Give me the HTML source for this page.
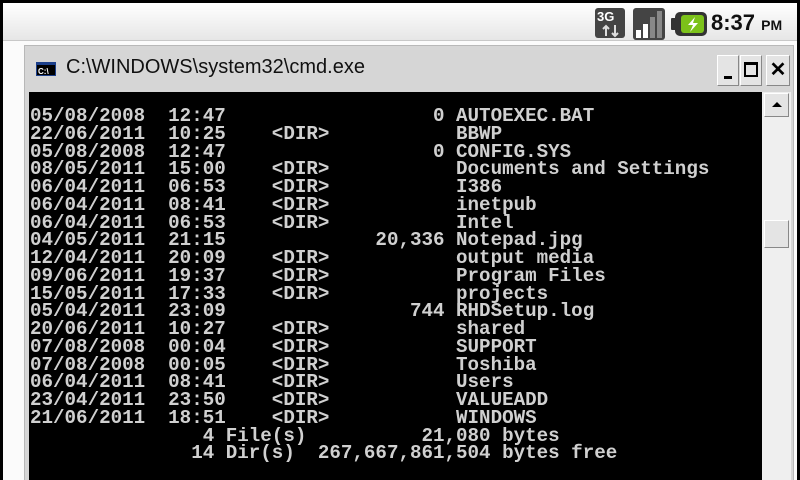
<!DOCTYPE html>
<html><head><meta charset="utf-8"><style>
*{margin:0;padding:0;box-sizing:border-box}
body{width:800px;height:480px;background:#000;position:relative;overflow:hidden;font-family:"Liberation Sans",sans-serif}
#screen{position:absolute;left:3px;top:3px;width:794px;height:477px;background:#fbfbfb;overflow:hidden}
#status{position:absolute;left:0;top:0;width:794px;height:38px;background:linear-gradient(#ffffff,#e6e6e6);border-bottom:1px solid #c8c8c8}
#win{position:absolute;left:21px;top:42px;width:770px;height:440px;background:#d6d6d6;border:1px solid #b8b8b8}
#title{position:absolute;left:0;top:0;width:770px;height:46px}
#console{position:absolute;left:4px;top:46px;width:733px;height:400px;background:#000}
pre{position:absolute;left:1px;top:16px;font-family:"Liberation Mono",monospace;font-weight:bold;font-size:19.2px;line-height:17.75px;color:#d0d0d0}
#sb{position:absolute;left:737px;top:46px;width:29px;height:400px;background:#efefef}
.btn{position:absolute;background:#e4e4e4;border:1px solid #fff;border-right-color:#888;border-bottom-color:#888}
</style></head><body>
<div id="screen">
 <div id="status">
  <svg style="position:absolute;left:592px;top:5px" width="30" height="30" viewBox="0 0 30 30">
   <rect x="0" y="0" width="30" height="30" rx="3" fill="#444"/>
   <text x="2" y="13" font-family="Liberation Sans" font-weight="bold" font-size="13" fill="#fff">3G</text>
   <path d="M11 28V19M8 21l3-3 3 3M20 17v10M17 25l3 3 3-3" stroke="#ddd" stroke-width="2" fill="none"/>
  </svg>
  <svg style="position:absolute;left:630px;top:5px" width="32" height="32" viewBox="0 0 32 32">
   <rect x="0" y="0" width="32" height="32" rx="3" fill="#444"/>
   <rect x="3" y="22" width="5" height="8" fill="#fff"/>
   <rect x="10" y="16" width="5" height="14" fill="#fff"/>
   <rect x="17" y="9" width="5" height="21" fill="#888"/>
   <rect x="24" y="3" width="5" height="27" fill="#888"/>
  </svg>
  <svg style="position:absolute;left:668px;top:9px" width="36" height="24" viewBox="0 0 36 24">
   <rect x="0" y="6" width="5" height="12" rx="1" fill="#333"/>
   <rect x="4" y="0" width="32" height="24" rx="5" fill="#333"/>
   <rect x="10" y="3" width="23" height="18" rx="3" fill="#7cc21a"/>
   <path d="M24 5l-7 8h5l-3 7 8-9h-5z" fill="#fff"/>
  </svg>
  <div style="position:absolute;left:708px;top:7px;font-size:22px;font-weight:bold;color:#111">8:37 <span style="font-size:14px">PM</span></div>
 </div>
 <div id="win">
  <div id="title">
   <svg style="position:absolute;left:11px;top:16px" width="20" height="14" viewBox="0 0 20 14">
    <rect width="20" height="14" fill="#1c3f8a"/><rect x="1" y="3" width="18" height="10" fill="#000"/>
    <text x="2" y="12" font-family="Liberation Sans" font-weight="bold" font-size="8" fill="#fff">C:\</text>
   </svg>
   <div style="position:absolute;left:41px;top:10px;font-size:20px;color:#111">C:\WINDOWS\system32\cmd.exe</div>
   <div class="btn" style="left:692px;top:9px;width:22px;height:31px"><div style="position:absolute;left:6px;top:20px;width:8px;height:3px;background:#000"></div></div>
   <div class="btn" style="left:715px;top:9px;width:22px;height:31px"><div style="position:absolute;left:3px;top:6px;width:14px;height:15px;border:2px solid #000;border-top-width:3px"></div></div>
   <div class="btn" style="left:741px;top:9px;width:24px;height:31px;font-weight:bold;font-size:20px;text-align:center;line-height:28px">✕</div>
  </div>
  <div id="console"><pre>05/08/2008  12:47                  0 AUTOEXEC.BAT
22/06/2011  10:25    &lt;DIR&gt;           BBWP
05/08/2008  12:47                  0 CONFIG.SYS
08/05/2011  15:00    &lt;DIR&gt;           Documents and Settings
06/04/2011  06:53    &lt;DIR&gt;           I386
06/04/2011  08:41    &lt;DIR&gt;           inetpub
06/04/2011  06:53    &lt;DIR&gt;           Intel
04/05/2011  21:15             20,336 Notepad.jpg
12/04/2011  20:09    &lt;DIR&gt;           output media
09/06/2011  19:37    &lt;DIR&gt;           Program Files
15/05/2011  17:33    &lt;DIR&gt;           projects
05/04/2011  23:09                744 RHDSetup.log
20/06/2011  10:27    &lt;DIR&gt;           shared
07/08/2008  00:04    &lt;DIR&gt;           SUPPORT
07/08/2008  00:05    &lt;DIR&gt;           Toshiba
06/04/2011  08:41    &lt;DIR&gt;           Users
23/04/2011  23:50    &lt;DIR&gt;           VALUEADD
21/06/2011  18:51    &lt;DIR&gt;           WINDOWS
               4 File(s)          21,080 bytes
              14 Dir(s)  267,667,861,504 bytes free</pre></div>
  <div id="sb">
   <div class="btn" style="left:2px;top:1px;width:25px;height:24px"><div style="position:absolute;left:7px;top:8px;width:0;height:0;border-left:5px solid transparent;border-right:5px solid transparent;border-bottom:5px solid #000"></div></div>
   <div class="btn" style="left:2px;top:128px;width:25px;height:28px"></div>
  </div>
 </div>
</div>
</body></html>
